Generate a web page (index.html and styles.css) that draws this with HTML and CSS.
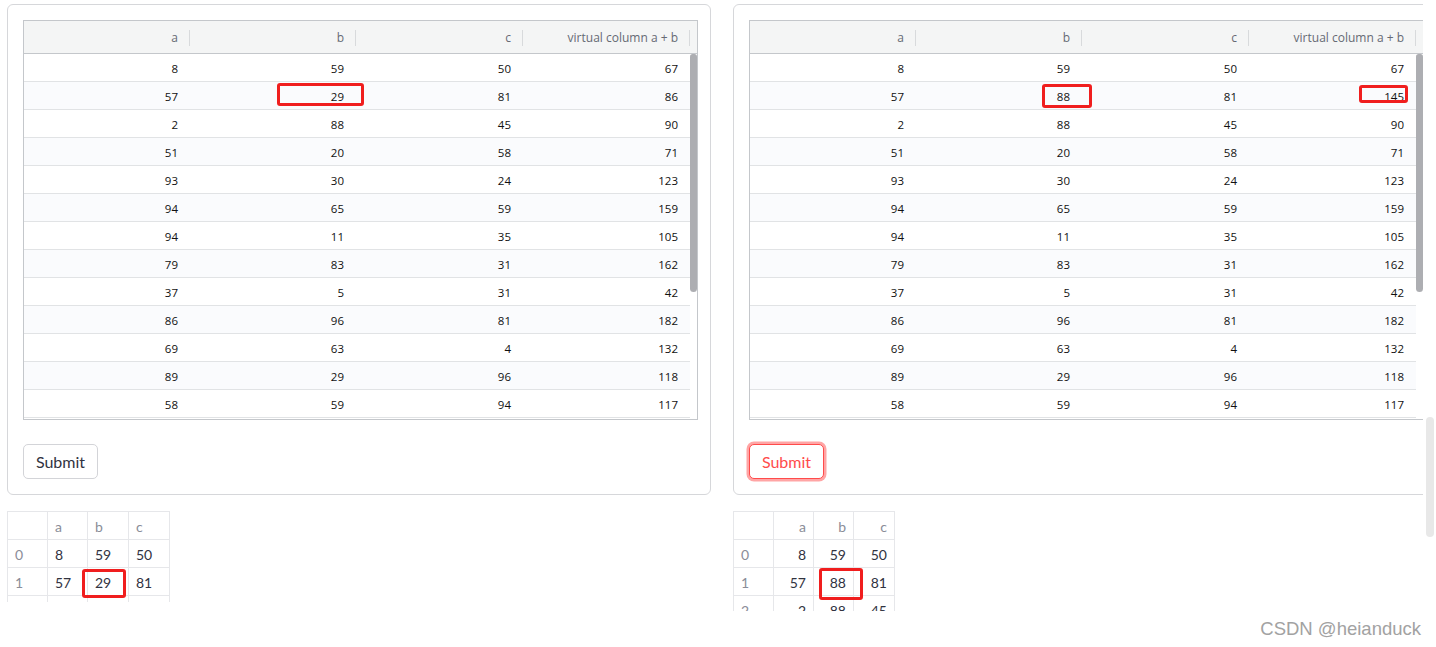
FILE: index.html
```html
<!DOCTYPE html>
<html>
<head>
<meta charset="utf-8">
<link rel="stylesheet" href="styles.css">
</head>
<body>
<div class="page">
  <div class="col col-left">
    <div class="form">
      <div class="grid">
        <div class="ghead"><span class="hc">a</span><span class="hc">b</span><span class="hc">c</span><span class="hc">virtual column a + b</span><span class="hfill"></span></div>
        <div class="gbody">
          <div class="rows">
            <div class="row"><span>8</span><span>59</span><span>50</span><span>67</span></div>
            <div class="row"><span>57</span><span>29</span><span>81</span><span>86</span></div>
            <div class="row"><span>2</span><span>88</span><span>45</span><span>90</span></div>
            <div class="row"><span>51</span><span>20</span><span>58</span><span>71</span></div>
            <div class="row"><span>93</span><span>30</span><span>24</span><span>123</span></div>
            <div class="row"><span>94</span><span>65</span><span>59</span><span>159</span></div>
            <div class="row"><span>94</span><span>11</span><span>35</span><span>105</span></div>
            <div class="row"><span>79</span><span>83</span><span>31</span><span>162</span></div>
            <div class="row"><span>37</span><span>5</span><span>31</span><span>42</span></div>
            <div class="row"><span>86</span><span>96</span><span>81</span><span>182</span></div>
            <div class="row"><span>69</span><span>63</span><span>4</span><span>132</span></div>
            <div class="row"><span>89</span><span>29</span><span>96</span><span>118</span></div>
            <div class="row"><span>58</span><span>59</span><span>94</span><span>117</span></div>
          </div>
          <div class="vbar"><div class="thumb"></div></div>
        </div>
        <span class="mark mark-lb"></span>
      </div>
      <button class="btn">Submit</button>
    </div>
    <div class="tclip tclip-left">
      <table class="df df-left">
        <tr><th></th><th>a</th><th>b</th><th>c</th></tr>
        <tr><th>0</th><td>8</td><td>59</td><td>50</td></tr>
        <tr><th>1</th><td>57</td><td>29</td><td>81</td></tr>
        <tr><th>2</th><td>2</td><td>88</td><td>45</td></tr>
      </table>
      <span class="mark mark-lt"></span>
    </div>
  </div>
  <div class="col col-right">
    <div class="form">
      <div class="grid">
        <div class="ghead"><span class="hc">a</span><span class="hc">b</span><span class="hc">c</span><span class="hc">virtual column a + b</span><span class="hfill"></span></div>
        <div class="gbody">
          <div class="rows">
            <div class="row"><span>8</span><span>59</span><span>50</span><span>67</span></div>
            <div class="row"><span>57</span><span>88</span><span>81</span><span>145</span></div>
            <div class="row"><span>2</span><span>88</span><span>45</span><span>90</span></div>
            <div class="row"><span>51</span><span>20</span><span>58</span><span>71</span></div>
            <div class="row"><span>93</span><span>30</span><span>24</span><span>123</span></div>
            <div class="row"><span>94</span><span>65</span><span>59</span><span>159</span></div>
            <div class="row"><span>94</span><span>11</span><span>35</span><span>105</span></div>
            <div class="row"><span>79</span><span>83</span><span>31</span><span>162</span></div>
            <div class="row"><span>37</span><span>5</span><span>31</span><span>42</span></div>
            <div class="row"><span>86</span><span>96</span><span>81</span><span>182</span></div>
            <div class="row"><span>69</span><span>63</span><span>4</span><span>132</span></div>
            <div class="row"><span>89</span><span>29</span><span>96</span><span>118</span></div>
            <div class="row"><span>58</span><span>59</span><span>94</span><span>117</span></div>
          </div>
          <div class="vbar"><div class="thumb"></div></div>
        </div>
        <span class="mark mark-rb"></span>
        <span class="mark mark-rv"></span>
      </div>
      <button class="btn btn-focus">Submit</button>
    </div>
    <div class="tclip tclip-right">
      <table class="df df-right">
        <tr><th></th><th>a</th><th>b</th><th>c</th></tr>
        <tr><th>0</th><td>8</td><td>59</td><td>50</td></tr>
        <tr><th>1</th><td>57</td><td>88</td><td>81</td></tr>
        <tr><th>2</th><td>2</td><td>88</td><td>45</td></tr>
      </table>
      <span class="mark mark-rt"></span>
    </div>
  </div>
</div>
<div class="page-scroll"></div>
<div class="watermark">CSDN @heianduck</div>
</body>
</html>
```
FILE: styles.css
```css
* { box-sizing: border-box; }
html, body { margin: 0; padding: 0; background: #fff; }
body { width: 1436px; height: 647px; overflow: hidden; position: relative; font-family: "Lato", "Open Sans", sans-serif; }

.page { display: flex; gap: 22px; padding: 4px 0 0 7px; align-items: flex-start; }
.col { flex: none; }
.col-left { width: 704px; }
.col-right { width: 690px; overflow: hidden; }

.form {
  width: 704px;
  border: 1px solid #d6d7da;
  border-radius: 6px;
  padding: 15px 12px 15px 15px;
}

.grid {
  position: relative;
  width: 675px;
  height: 400px;
  border: 1px solid #c4c7cb;
  font-family: "Open Sans", "Noto Sans", sans-serif;
  font-size: 11.5px;
}
.ghead {
  display: grid;
  grid-template-columns: 166px 166px 167px 167px 1fr;
  height: 33px;
  background: #f4f5f5;
  border-bottom: 1px solid #c4c7cb;
}
.hc {
  text-align: right;
  padding-right: 12px;
  padding-top: 1px;
  line-height: 32px;
  font-size: 12px;
  color: #666a74;
  background: linear-gradient(#d8dadc, #d8dadc) right center / 1px 16px no-repeat;
}
.gbody { display: flex; height: 365px; overflow: hidden; }
.rows { width: 666px; flex: none; }
.row {
  display: grid;
  grid-template-columns: 166px 166px 167px 167px;
  height: 28px;
  border-bottom: 1px solid #e1e3e5;
  color: #111;
}
.row:nth-child(even) { background: #fafbfd; }
.row span { text-align: right; padding-right: 12px; padding-top: 1px; line-height: 27px; }
.vbar { width: 7px; flex: none; }
.thumb { height: 238px; background: #adaeb2; border-radius: 3px 3px 4px 4px; }

.btn {
  display: block;
  margin-top: 24px;
  height: 35px;
  width: 75px;
  padding: 0 0 1px;
  background: #fff;
  border: 1px solid #d3d4d8;
  border-radius: 5px;
  font-family: "Lato", "Open Sans", sans-serif;
  font-size: 16px;
  color: #31333f;
}
.btn-focus {
  border-color: #ff4b4b;
  color: #ff4b4b;
  box-shadow: 0 0 0 2.5px rgba(255, 75, 75, 0.5);
}

.tclip { position: relative; margin-top: 16px; overflow: hidden; }
.tclip-left { height: 91px; }
.tclip-right { height: 100px; }

.df {
  border-collapse: collapse;
  font-family: "Lato", "Open Sans", sans-serif;
  font-size: 14px;
  color: #31333f;
}
.df th, .df td {
  border: 1px solid #e6e7ea;
  height: 28px;
  padding: 1px 7px 0;
  font-weight: normal;
  text-align: left;
}
.df th { color: #8a8d98; }
.df-left th:nth-child(1) { width: 40px; }
.df-left th:nth-child(2) { width: 40px; }
.df-left th:nth-child(3) { width: 41px; }
.df-left th:nth-child(4) { width: 41px; }
.df-right tr > *:nth-child(1) { width: 40px; }
.df-right tr > *:nth-child(2) { width: 40px; }
.df-right tr > *:nth-child(3) { width: 40px; }
.df-right tr > *:nth-child(4) { width: 41px; }
.df-right td, .df-right tr:first-child th { text-align: right; }
.df-right tr:first-child th:first-child { text-align: left; }

.mark {
  position: absolute;
  border: 3px solid #f01e1e;
  border-radius: 3px;
}
.mark-lb { left: 253px; top: 62px; width: 87px; height: 23px; }
.mark-rb { left: 292px; top: 63px; width: 50px; height: 24px; }
.mark-rv { left: 609px; top: 64px; width: 49px; height: 18px; }
.mark-lt { left: 75px; top: 58px; width: 44px; height: 29px; }
.mark-rt { left: 86px; top: 57px; width: 44px; height: 32px; }

.page-scroll {
  position: absolute;
  left: 1426px;
  top: 417px;
  width: 8px;
  height: 120px;
  background: #e8e8e8;
  border-radius: 4px;
}
.watermark {
  position: absolute;
  right: 15px;
  top: 618px;
  font-family: "Liberation Sans", Arial, sans-serif;
  font-size: 18.5px;
  color: #a2a2a2;
}
```
